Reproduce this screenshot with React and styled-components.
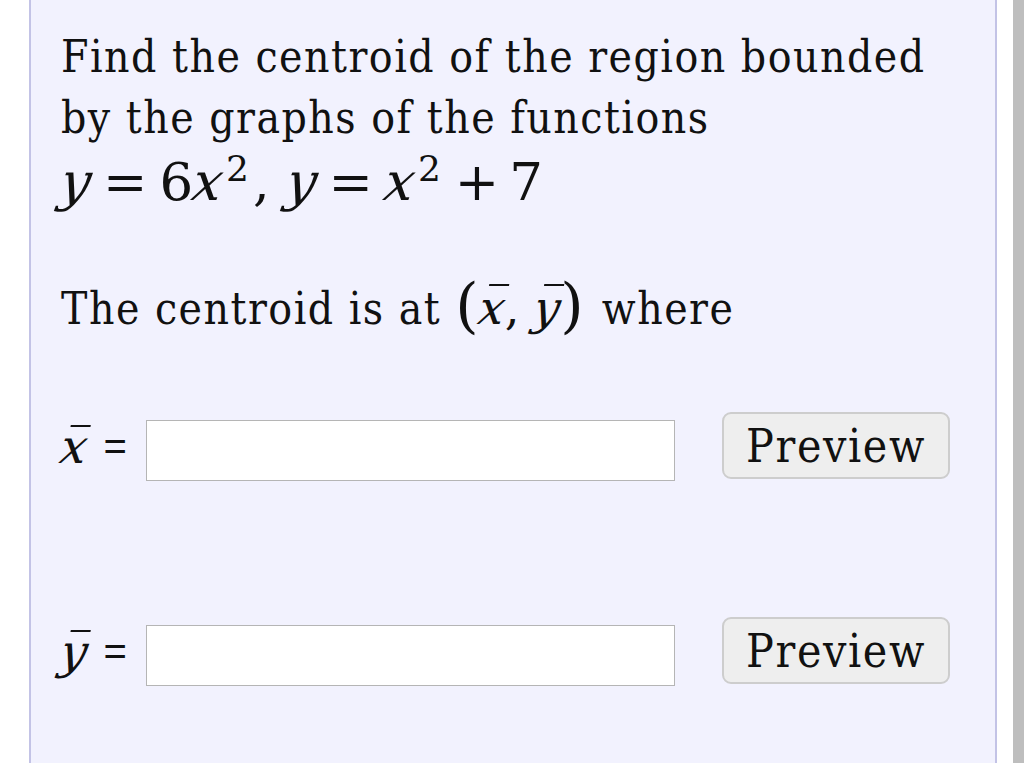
import React from "react"
import styled, { createGlobalStyle } from "styled-components"

const GlobalStyle = createGlobalStyle`
    html, body {
        margin: 0;
        padding: 0;
        background: #ffffff;
    }
    body {
        width: 1024px;
        height: 763px;
        overflow: hidden;
    }
`

const MATH = `"DejaVu Serif", "Liberation Serif", serif`

const Page = styled.div`
    display: flex;
    height: 763px;
    padding-left: 29px;
    box-sizing: border-box;
`

const Panel = styled.div`
    width: 968px;
    height: 100%;
    box-sizing: border-box;
    background-color: #f2f2fe;
    border-left: 2px solid #c3c3e6;
    border-right: 2px solid #c3c3e6;
    padding: 26px 40px 0 30px;
    font-family: "DejaVu Serif", "Liberation Serif", serif;
    color: #111111;
`

const Gutter = styled.div`
    width: 16px;
    background: #ffffff;
`

const Scrollbar = styled.div`
    width: 11px;
    background: #bebebe;
`

const Paragraph = styled.p`
    margin: 0;
    font-size: 44px;
    line-height: 61px;
    font-stretch: condensed;
    letter-spacing: 1.5px;
    white-space: nowrap;
    margin-top: ${(props) => props.top || "0px"};
`

const MathLine = styled.div`
    font-family: ${MATH};
    font-stretch: normal;
    font-size: 53px;
    line-height: 68px;
    white-space: nowrap;
`

const V = styled.span`
    display: inline-block;
    font-family: ${MATH};
    font-stretch: normal;
    font-style: italic;
    transform: skewX(-10deg);
`

const Num = styled.span`
    font-family: ${MATH};
    font-stretch: normal;
    font-style: normal;
`

const Op = styled.span`
    display: inline-block;
    font-family: ${MATH};
    font-stretch: normal;
    font-weight: 300;
    line-height: 1;
    margin: 0 ${(props) => props.space || "12px"};
`

const Sup = styled.span`
    display: inline-block;
    position: relative;
    top: -0.52em;
    font-family: ${MATH};
    font-size: 0.68em;
    line-height: 1;
    margin-left: 3px;
    margin-right: 4px;
`

const Bar = styled.span`
    position: relative;
    display: inline-block;
    font-family: ${MATH};
    font-stretch: normal;
    font-style: italic;
    letter-spacing: 0;
    transform: skewX(-10deg);
    &::before {
        content: "";
        position: absolute;
        left: 22%;
        right: 2%;
        top: 0.12em;
        border-top: 0.055em solid #111111;
    }
`

const InlineMath = styled.span`
    font-family: ${MATH};
    font-stretch: normal;
    font-size: 1.05em;
    letter-spacing: 0;
    margin: 0 4px 0 0;
`

const Paren = styled.span`
    font-family: ${MATH};
    font-size: 1.3em;
    font-weight: 300;
    line-height: 0;
    vertical-align: -0.04em;
`

const Answers = styled.div`
    display: flex;
    flex-direction: column;
    gap: 136px;
    margin-top: 73px;
`

const AnswerRow = styled.div`
    display: flex;
    align-items: flex-start;
`

const Label = styled.div`
    width: 85px;
    height: 67px;
    display: flex;
    align-items: center;
    font-size: 47px;
    padding-top: 2px;
    box-sizing: border-box;
`

const Equals = styled.span`
    font-family: "Liberation Sans", Arial, sans-serif;
    font-style: normal;
    font-size: 40px;
    margin-left: 16px;
`

const Input = styled.input`
    width: 529px;
    height: 61px;
    margin-top: 8px;
    box-sizing: border-box;
    border: 1px solid #b5b5b5;
    background: #ffffff;
    outline: none;
`

const PreviewButton = styled.button`
    width: 228px;
    height: 67px;
    margin-left: 47px;
    box-sizing: border-box;
    background-color: #eeeeee;
    border: 2px solid #cdcdcd;
    border-radius: 9px;
    font-family: "DejaVu Serif", "Liberation Serif", serif;
    font-stretch: condensed;
    font-size: 46px;
    letter-spacing: 1.6px;
    color: #111111;
    padding: 0;
`

export default () => {
    return (
        <>
        <GlobalStyle />
        <Page>
            <Panel>
                <Paragraph>Find the centroid of the region bounded</Paragraph>
                <Paragraph>by the graphs of the functions</Paragraph>
                <MathLine>
                    <V>y</V><Op>=</Op><Num>6</Num><V>x</V><Sup>2</Sup><Num>,</Num> <V>y</V><Op>=</Op><V>x</V><Sup>2</Sup><Op space="10px">+</Op><Num>7</Num>
                </MathLine>
                <Paragraph top="62px">
                    The centroid is at <InlineMath><Paren>(</Paren><Bar>x</Bar>, <Bar>y</Bar><Paren>)</Paren></InlineMath> where
                </Paragraph>
                <Answers>
                    <AnswerRow>
                        <Label><Bar>x</Bar><Equals>=</Equals></Label>
                        <Input type="text" />
                        <PreviewButton>Preview</PreviewButton>
                    </AnswerRow>
                    <AnswerRow>
                        <Label><Bar>y</Bar><Equals>=</Equals></Label>
                        <Input type="text" />
                        <PreviewButton>Preview</PreviewButton>
                    </AnswerRow>
                </Answers>
            </Panel>
            <Gutter />
            <Scrollbar />
        </Page>
        </>
    )
}
